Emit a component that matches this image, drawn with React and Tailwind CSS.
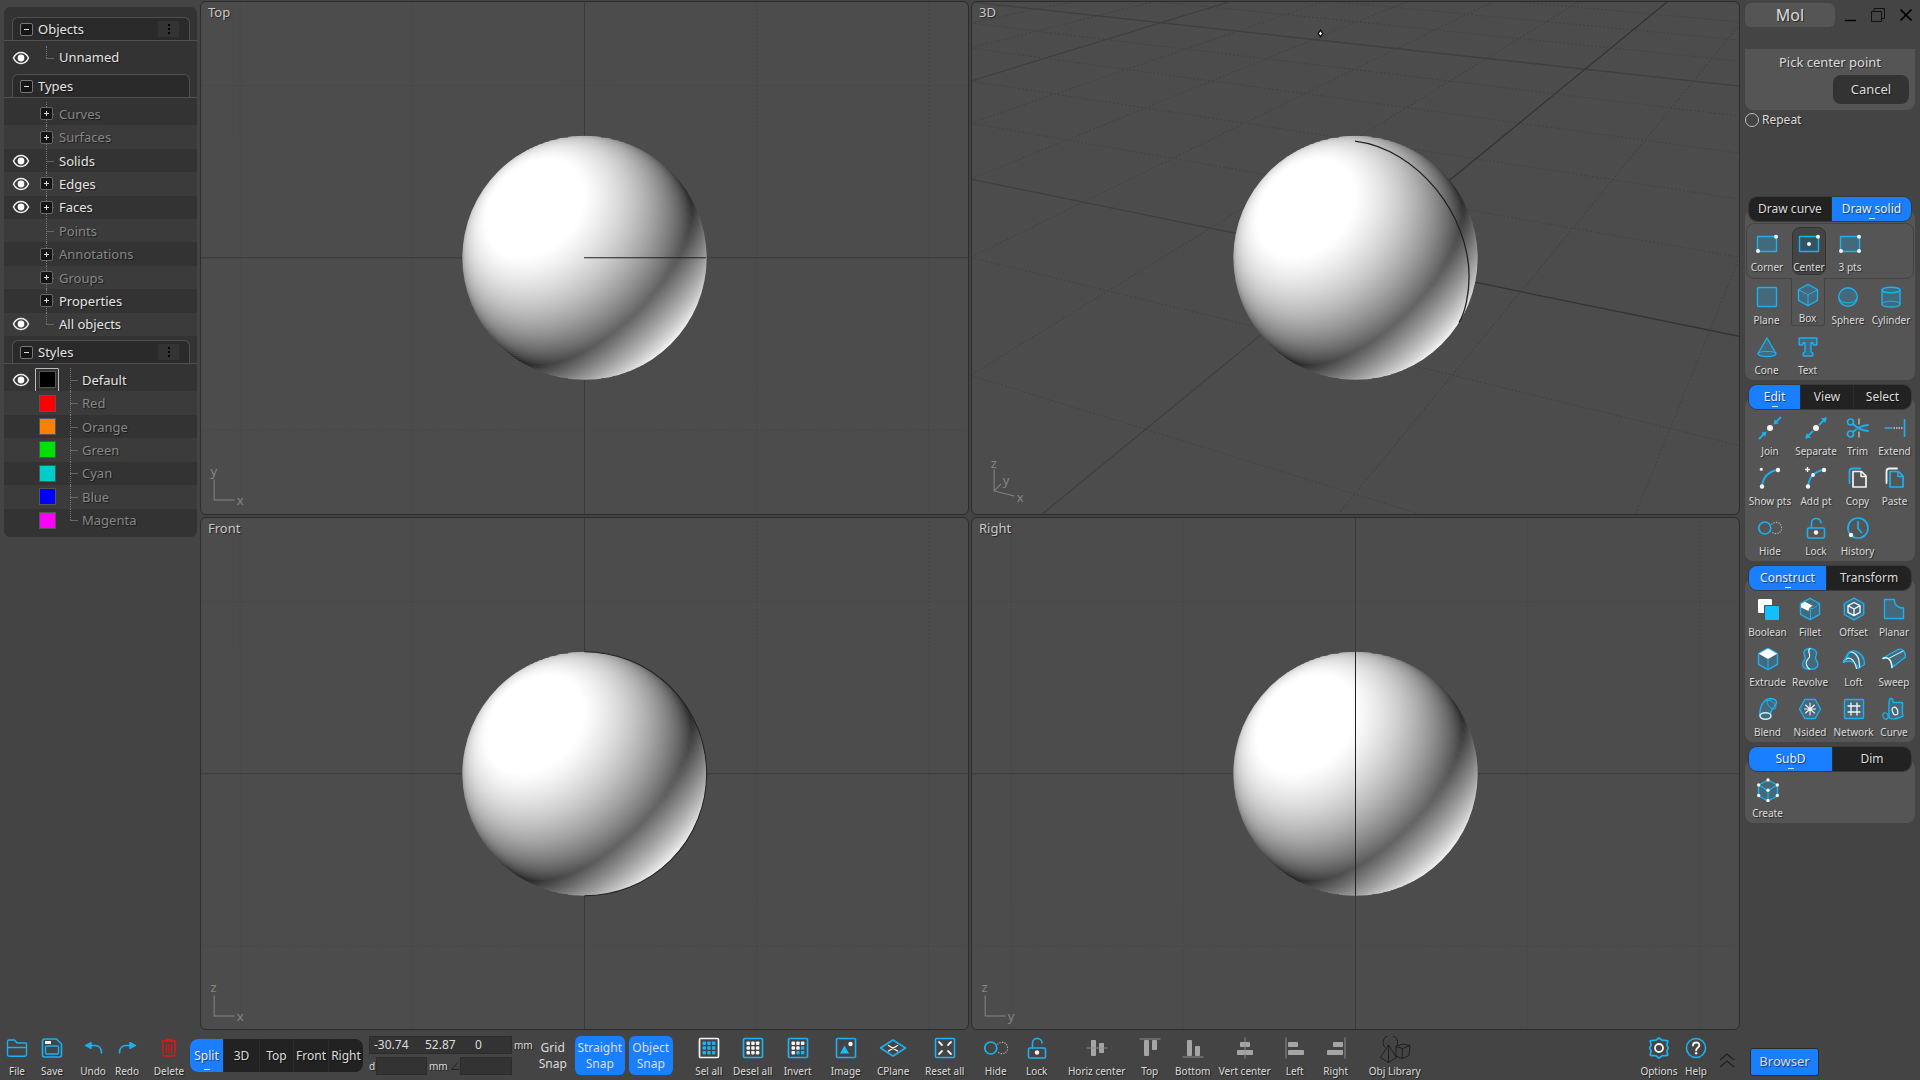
import { useState } from "react";

const BLUE = "#1cb0f0";
const TINT = "#44697a";
const WHITE = "#f4f4f4";

const textShadow = "[text-shadow:1px_1px_1px_rgba(0,0,0,0.55)]";

/* ---------- icons ---------- */

function Svg({ w = 24, children }) {
  return (
    <svg
      width={w}
      height="24"
      viewBox={`0 0 ${w} 24`}
      fill="none"
      stroke={BLUE}
      strokeWidth="1.4"
      strokeLinejoin="round"
      strokeLinecap="round"
      className="shrink-0"
      aria-hidden="true"
    >
      {children}
    </svg>
  );
}

const Dot = ({ x, y, r = 2 }) => (
  <circle cx={x} cy={y} r={r} fill={WHITE} stroke="none" />
);

const CornerIcon = () => (
  <Svg>
    <rect x="2.5" y="4.5" width="19" height="15" fill={TINT} />
    <Dot x="21" y="4.8" />
    <Dot x="3" y="19" />
  </Svg>
);
const CenterIcon = () => (
  <Svg>
    <rect x="2.5" y="4.5" width="19" height="15" fill="#315463" />
    <Dot x="21" y="4.8" />
    <Dot x="12" y="12" />
  </Svg>
);
const ThreePtsIcon = () => (
  <Svg>
    <rect x="2.5" y="4.5" width="19" height="15" fill={TINT} />
    <Dot x="21" y="4.8" />
    <Dot x="3" y="19" />
    <Dot x="21" y="19" />
  </Svg>
);
const PlaneIcon = () => (
  <Svg>
    <rect x="2.5" y="2.5" width="19" height="19" rx="1" fill={TINT} />
  </Svg>
);
const BoxIcon = () => (
  <Svg>
    <path d="M12 1.3 21.5 6.5v10.8L12 22.7 2.5 17.3V6.5z" fill={TINT} />
    <path d="M2.8 6.8 12 12l9.2-5.2M12 12v10.5" strokeWidth="1" />
  </Svg>
);
const SphereIcon = () => (
  <Svg>
    <circle cx="12" cy="12" r="9.3" fill={TINT} />
    <path d="M3 13.5c2.5 6 15.5 6 18 0" strokeWidth="1" />
  </Svg>
);
const CylinderIcon = () => (
  <Svg>
    <path d="M3 5v14c0 4 18 4 18 0V5" fill={TINT} />
    <ellipse cx="12" cy="5" rx="9" ry="2.8" fill={TINT} />
    <path d="M3 19c0-4 18-4 18 0" strokeWidth="1" />
  </Svg>
);
const ConeIcon = () => (
  <Svg>
    <path d="M12 3 3 18.5c0 4 18 4 18 0z" fill={TINT} />
    <path d="M3 18.5c0-3 18-3 18 0" strokeWidth="1" />
  </Svg>
);
const TextIcon = () => (
  <Svg>
    <path
      d="M3.2 3h17.6v7h-3.3c0-2-.5-2.5-2.5-2.5v9c0 1 .5 1.2 1.8 1.5v3H7.2v-3c1.300-.3 1.8-.5 1.8-1.5v-9c-2 0-2.500.5-2.500 2.500H3.2z"
      fill={TINT}
    />
  </Svg>
);
const JoinIcon = () => (
  <Svg>
    <path d="M22.5 1.5 18 6M1.5 22.5 6 18" strokeWidth="1.8" />
    <path d="m15.5 8.5 1.2-5.2 4 4zM8.5 15.5l-1.2 5.2-4-4z" fill={BLUE} stroke="none" />
    <Dot x="12" y="12" r="3" />
  </Svg>
);
const SeparateIcon = () => (
  <Svg>
    <path d="m15.5 8.5 4-4M8.5 15.5l-4 4" strokeWidth="1.8" />
    <path d="m22.8 1.2-1.3 5.8-4.5-4.5zM1.2 22.8l1.3-5.8L7 21.5z" fill={BLUE} stroke="none" />
    <Dot x="12" y="12" r="3" />
  </Svg>
);
const TrimIcon = () => (
  <Svg>
    <path d="M13 3v5M13 16v5" stroke="#b5b5b5" strokeWidth="1.5" />
    <circle cx="4.5" cy="6" r="3" strokeWidth="1.7" />
    <circle cx="4.5" cy="18" r="3" strokeWidth="1.7" />
    <path d="M7 8c4 4 9 6.500 15 7M7 16c4-4 9-6.500 15-7" strokeWidth="1.8" />
  </Svg>
);
const ExtendIcon = () => (
  <Svg>
    <path d="M1.5 12h8M21.5 3v18" strokeWidth="1.6" strokeLinecap="butt" />
    <path d="M10.5 12h10" stroke="#c5c5c5" strokeDasharray="1.5 1" strokeLinecap="butt" />
  </Svg>
);
const ShowPtsIcon = () => (
  <Svg>
    <path d="M4 20C5 11 11 5 20 4" strokeWidth="1.8" />
    <Dot x="4" y="20.5" r="2.2" />
    <Dot x="20" y="4" r="2.2" />
    <Dot x="3.3" y="3.3" r="1.5" />
  </Svg>
);
const AddPtIcon = () => (
  <Svg>
    <path d="M4 20C5 11 11 5 20 4" strokeWidth="1.8" />
    <Dot x="4" y="20.5" r="2.2" />
    <Dot x="20" y="4" r="2.2" />
    <Dot x="9" y="9" r="1.9" />
    <path d="M3.5 1v5M1 3.5h5" stroke={WHITE} strokeLinecap="butt" />
  </Svg>
);
const Pages = ({ front, back }) => (
  <Svg>
    <path d="M14 2.5H6.5a3 3 0 0 0-3 3V17" stroke={back} strokeWidth="1.8" />
    <path d="M7 5.5h8.5l4.500 4.500v11H7z" stroke={front} strokeWidth="1.7" />
    <path d="M15 5.8v4.7h4.8" stroke={front} strokeWidth="1.5" />
  </Svg>
);
const CopyIcon = () => <Pages front={WHITE} back={BLUE} />;
const PasteIcon = () => <Pages front={BLUE} back={WHITE} />;
const HideIcon = () => (
  <Svg>
    <circle cx="6.8" cy="12" r="6" strokeWidth="1.7" />
    <path
      d="M13.5 8.5a5.7 5.7 0 1 1 0 7"
      stroke="#b5b5b5"
      strokeWidth="1.2"
      strokeDasharray="1.2 1.3"
      strokeLinecap="butt"
    />
  </Svg>
);
const LockIcon = () => (
  <Svg>
    <rect x="3.5" y="12" width="17" height="10" rx="1.2" strokeWidth="1.6" />
    <path d="M7.5 12V7c0-6 9.500-6 9.500 0" strokeWidth="1.6" />
    <Dot x="12" y="16.5" r="2.2" />
  </Svg>
);
const HistoryIcon = () => (
  <Svg>
    <circle cx="12" cy="12" r="10" strokeWidth="1.7" />
    <path d="M12 5.5v7l3.500 4" strokeWidth="1.7" />
    <Dot x="5" y="19" r="2.2" />
  </Svg>
);
const BooleanIcon = () => (
  <Svg>
    <rect x="2" y="2" width="14" height="14" rx="1" fill="#fff" stroke="none" />
    <rect x="8" y="8" width="15" height="15" rx="1" fill="#4d4d4d" stroke="none" />
    <rect x="9" y="9" width="14" height="14" rx="1" fill="#12bfff" stroke="none" />
  </Svg>
);
const FilletIcon = () => (
  <Svg>
    <path d="M12 1.3 21.5 6.5v10.8L12 22.7 2.5 17.3V6.5z" fill={TINT} />
    <path d="M13 11.5c4 1 6-4 8.500-5M12.500 12v10.500" strokeWidth="1" />
    <path d="m3 7 4-2.300 8 4.300c-2.500.5-4 2-4.500 5L3.200 10.500z" fill="#fff" stroke="none" />
  </Svg>
);
const OffsetIcon = () => (
  <Svg>
    <path d="M12 1.2 21.7 6.5v11L12 22.8 2.3 17.5v-11z" fill={TINT} />
    <path d="m12 5.5 6 3.200v6.700l-6 3.300-6-3.300V8.700zM6 8.700l6 3.300 6-3.300M12 12v6.500" stroke={WHITE} />
  </Svg>
);
const PlanarIcon = () => (
  <Svg>
    <path d="M2.5 2.5h10c-.5 5 3 8.500 9 8.500v10.500h-19z" fill={TINT} />
  </Svg>
);
const ExtrudeIcon = () => (
  <Svg>
    <path d="M12 1.3 21.5 6.5v10.8L12 22.7 2.5 17.3V6.5z" fill={TINT} />
    <path d="M12 12v10.5" strokeWidth="1" />
    <path d="m12 1.5 9.200 5.200L12 12 2.800 6.700z" fill="#fff" stroke="none" />
  </Svg>
);
const RevolveIcon = () => (
  <Svg>
    <path
      d="M12 1.5c-4.500 0-7 2.700-6 5.500.5 2 1.800 3 1 5-1.500 2-3 3.500-2.500 6 1 5.500 13.500 5.800 15.200.5.700-2.800-.7-4.500-2-6.500-.8-2 .5-3 .8-5C19 3.500 16 1.500 12 1.500z"
      fill={TINT}
    />
    <path d="M12 1.5c-3.500 2.500 1 5.500-.5 8.500-2 3-4.500 4.500-3 8 .5 1.800 1.500 3 3 4" stroke="#d5eef8" strokeWidth="1.2" />
  </Svg>
);
const LoftIcon = () => (
  <Svg>
    <path d="M5.500 7C10 .5 22.500 5 22.500 17.500l-6.500 4C15 17 11 12.500 1.500 15z" fill={TINT} />
    <path d="M1.500 15C5 9 12 9.500 14.500 21.500M8 5c6.500 0 9.500 6 9.500 15" stroke="#e3f5fd" strokeWidth="1.2" />
    <path d="M1.500 15 8 4.500" strokeWidth="1.4" />
  </Svg>
);
const SweepIcon = () => (
  <Svg>
    <path d="M1 11 16 2.500c4.500-1.500 7.500 2 7.500 7.500L10 20.500C10 14 7 9.500 1 11z" fill={TINT} />
    <path d="M1 11.500c5.500-2.500 8.500 2 9 9" stroke="#dff4fd" strokeWidth="1.5" />
    <path d="M7.500 11 21 4" stroke="#dff4fd" strokeWidth="1" />
  </Svg>
);
const BlendIcon = () => (
  <Svg>
    <path d="M3.500 18C4 10 6.500 4 11.500 2c5-1.500 9.500.5 9 4-1 4-6 5-6.500 13" fill={TINT} />
    <path d="M11 4c-1 3 5 10 8.500 7.500C22 8 14 1 11 4z" strokeWidth="1" />
    <ellipse cx="9.5" cy="19" rx="5.5" ry="3.2" fill={TINT} stroke="#c9effd" strokeWidth="1.5" />
  </Svg>
);
const NsidedIcon = () => (
  <Svg>
    <path d="M6.800 2.500h10.400L22.500 12l-5.300 9.500H6.800L1.500 12z" fill={TINT} />
    <path d="M12 6v12M6.500 12h11M7.500 8l9 8M16.500 8l-9 8" stroke={WHITE} strokeWidth="1.1" />
  </Svg>
);
const NetworkIcon = () => (
  <Svg>
    <rect x="2.5" y="2.5" width="19" height="19" rx="1" fill={TINT} />
    <path d="M9 6v12M15 6v12M6 9h12M6 15h12" stroke={WHITE} strokeWidth="1.3" />
  </Svg>
);
const CurveIcon = () => (
  <Svg>
    <path d="M7 5.500C7 0 11 .5 11 5.500h9.500c.5 5-1 9 .5 13.500-4 2-9 4.500-13.500 2C6 16 7.500 10 7 5.500z" fill={TINT} />
    <ellipse cx="13" cy="14" rx="2.6" ry="4" stroke={WHITE} strokeWidth="1.2" transform="rotate(-18 13 14)" />
    <ellipse cx="3.5" cy="19" rx="2.5" ry="3.3" strokeWidth="1.2" transform="rotate(-18 3.5 19)" />
  </Svg>
);
const CreateIcon = () => (
  <Svg>
    <path d="M12 2 21.500 7v11L12 23 2.500 18V7z" fill={TINT} />
    <path d="M2.500 7 12 12.500 21.500 7M12 12.500V23" strokeWidth="1.1" />
    {[[12, 2], [21.3, 7], [21.3, 17.5], [12, 22.5], [2.7, 17.5], [2.7, 7], [12, 12.3]].map(([x, y]) => (
      <Dot key={`${x}-${y}`} x={x} y={y} r="1.7" />
    ))}
  </Svg>
);

const FileIcon = () => (
  <Svg>
    <path d="M2.500 18.500V5.500a1.500 1.500 0 0 1 1.500-1.500h5.500L12 7h8.500a1 1 0 0 1 1 1v10.500a1.800 1.800 0 0 1-1.800 1.800H4.300a1.800 1.800 0 0 1-1.800-1.800zM2.500 11.500h19" />
  </Svg>
);
const SaveIcon = () => (
  <Svg>
    <path d="M4.500 3h12L21.500 8v11a2 2 0 0 1-2 2h-15a2 2 0 0 1-2-2V5a2 2 0 0 1 2-2z" strokeWidth="1.6" />
    <rect x="5.5" y="10" width="13" height="8" rx="1" />
    <rect x="5" y="5" width="6" height="3" fill={WHITE} stroke="none" />
  </Svg>
);
const UndoIcon = () => (
  <Svg>
    <path d="M5 9.500h9c4 0 6.500 3 6.500 7.500" strokeWidth="1.6" />
    <path d="m4.500 9.500 5.500-3v6z" fill={BLUE} />
  </Svg>
);
const RedoIcon = () => (
  <Svg>
    <path d="M20 9.500h-9c-4 0-6.500 3-6.500 7.500" strokeWidth="1.6" />
    <path d="m20.500 9.500-5.500-3v6z" fill={BLUE} />
  </Svg>
);
const DeleteIcon = () => (
  <Svg>
    <g stroke="#e01414">
      <path d="M6 6v12.500a1.500 1.500 0 0 0 1.500 1.500h9a1.500 1.500 0 0 0 1.500-1.500V6M5 5h14M9.500 4.500v-1h5v1" strokeWidth="1.5" />
      <path d="M9.500 8v9.500M12 8v9.500M14.500 8v9.500" strokeWidth="1.1" />
    </g>
  </Svg>
);

const gridCells = [0, 1, 2].flatMap((r) => [0, 1, 2].map((c) => [r, c]));
const Matrix = ({ frame, fill }) => (
  <Svg>
    <rect x="2.5" y="2.5" width="19" height="19" rx="1.2" stroke={frame} strokeWidth="1.7" />
    {gridCells.map(([r, c]) => (
      <rect
        key={`${r}-${c}`}
        x={5.5 + c * 4.7}
        y={5.5 + r * 4.7}
        width="3.5"
        height="3.5"
        rx="0.8"
        fill={fill(r, c)}
        stroke="none"
      />
    ))}
  </Svg>
);
const SelAllIcon = () => <Matrix frame={WHITE} fill={() => BLUE} />;
const DeselAllIcon = () => <Matrix frame={BLUE} fill={() => WHITE} />;
const InvertIcon = () => (
  <Matrix frame={BLUE} fill={(r, c) => (r + c > 2 || (r === 2 && c > 0) ? BLUE : WHITE)} />
);
const ImageIcon = () => (
  <Svg>
    <rect x="2.5" y="2.5" width="19" height="19" rx="1" strokeWidth="1.6" />
    <path d="m10.500 9.500 4.500 8H6z" fill="#12bfff" stroke="none" />
    <Dot x="16.5" y="8" r="2.2" />
  </Svg>
);
const CPlaneIcon = () => (
  <Svg w={28}>
    <path d="M14 4 26.500 12 14 20 1.500 12z" strokeWidth="1.6" />
    <path d="m9.500 9.500 9 5.500M18.500 9.500l-9 5.500" stroke={WHITE} />
  </Svg>
);
const ResetIcon = () => (
  <Svg>
    <rect x="2.5" y="2.5" width="19" height="19" rx="1" strokeWidth="1.6" />
    <path d="m6 6 3 3M18 6l-3 3M6 18l3-3M18 18l-3-3" stroke={WHITE} strokeWidth="1.8" />
  </Svg>
);

const Align = ({ d, bars }) => (
  <Svg>
    {bars.map(([x, y, w, h]) => (
      <rect key={`${x}-${y}`} x={x} y={y} width={w} height={h} rx="0.8" fill="#a5a5a5" stroke="none" />
    ))}
    <path d={d} stroke="#8c8c8c" strokeWidth="1" strokeLinecap="butt" />
  </Svg>
);
const HorizCenterIcon = () => <Align bars={[[6, 4, 5, 16], [14, 7, 5, 10]]} d="M1.500 12h21" />;
const TopIcon = () => <Align bars={[[6, 4, 5, 16], [14, 4, 5, 10]]} d="M1.500 3h21" />;
const BottomIcon = () => <Align bars={[[6, 4, 5, 16], [14, 10, 5, 10]]} d="M1.500 21h21" />;
const VertCenterIcon = () => <Align bars={[[7, 6, 10, 5], [4, 14, 16, 5]]} d="M12 1.500v21" />;
const LeftIcon = () => <Align bars={[[5, 6, 10, 5], [5, 14, 16, 5]]} d="M3 1.500v21" />;
const RightIcon = () => <Align bars={[[9, 6, 10, 5], [3, 14, 16, 5]]} d="M21 1.500v21" />;
const LibraryIcon = () => (
  <svg width="34" height="28" viewBox="0 0 34 28" fill="none" stroke="#1f1f1f" className="-mb-1 shrink-0" aria-hidden="true">
    <path d="M7 11.500a7.300 7.300 0 1 1 11.500-1M10.500 9 2.500 21.500l8 5 8-5zM10.500 9v17.500M18 10.500l7-2.500 7 1.500-1 10-7 3-6-2.500zM18 10.500l6.500 2L32 9.500M24.500 12.500l-.5 10" />
  </svg>
);
const OptionsIcon = () => (
  <Svg>
    <path
      d="M12 1.800c1.500 1.200 2.500 2.300 4 2.500 1.500.200 2.800-.3 4.800.6-.2 2-1.100 3.300-.8 4.600.3 1.200 1.300 1.500 1.300 2.500s-1 1.300-1.300 2.500c-.3 1.300.6 2.600.8 4.600-2 .9-3.300.4-4.800.6-1.500.2-2.500 1.300-4 2.500-1.500-1.200-2.500-2.300-4-2.500-1.500-.2-2.800.3-4.800-.6.2-2 1.100-3.300.8-4.600C3.700 13.300 2.700 13 2.700 12S3.700 10.700 4 9.500c.3-1.300-.6-2.600-.8-4.600 2-.9 3.300-.4 4.800-.6 1.500-.2 2.500-1.300 4-2.500z"
      strokeWidth="1.7"
    />
    <circle cx="12" cy="12" r="4" stroke={WHITE} strokeWidth="1.8" />
  </Svg>
);
const HelpIcon = () => (
  <Svg>
    <circle cx="12" cy="12" r="9.5" strokeWidth="1.6" />
    <path d="M9 9.500c0-4 6.300-4 6.300-.3 0 2.600-3.200 2.500-3.200 5.200" stroke={WHITE} strokeWidth="1.9" />
    <Dot x="12.1" y="17.3" r="1.2" />
  </Svg>
);

/* ---------- shared controls ---------- */

function IconButton({ icon: Icon, label, className = "" }) {
  return (
    <button className={`flex flex-col items-center gap-[5px] text-[10px] leading-3 whitespace-nowrap ${className}`}>
      <Icon />
      <span className={textShadow}>{label}</span>
    </button>
  );
}

function Tabs({ items, initial, widths, className = "" }) {
  const [active, setActive] = useState(initial);
  return (
    <div className={`flex overflow-hidden bg-[#222] text-xs ${className}`}>
      {items.map((item, i) => (
        <button
          key={item}
          onClick={() => setActive(item)}
          className={`relative border-r border-[#2c2c2c] last:border-r-0 ${textShadow} ${widths[i]} ${
            active === item ? "bg-[#1a7fff] text-[#eee]" : ""
          }`}
        >
          {item}
          {active === item && (
            <span className="absolute bottom-[2px] left-1/2 -ml-[3px] h-px w-[6px] bg-[#e0e0e0]" />
          )}
        </button>
      ))}
    </div>
  );
}

/* ---------- object browser ---------- */

const Eye = () => (
  <svg width="18" height="14" viewBox="0 0 18 14" aria-hidden="true">
    <path d="M1.500 7C5-.3 13-.3 16.500 7 13 14.300 5 14.300 1.500 7z" fill="none" stroke="#eee" strokeWidth="1.6" />
    <circle cx="9" cy="7" r="3.4" fill="#fff" />
  </svg>
);

const Toggle = ({ open, dim }) => (
  <span
    className={`relative flex size-[13px] items-center justify-center rounded-[2px] border bg-[#151515] ${
      dim ? "border-[#666]" : "border-[#777]"
    }`}
  >
    <span className="absolute h-px w-[5px] bg-[#ddd]" />
    {!open && <span className="absolute h-[5px] w-px bg-[#ddd]" />}
  </span>
);

function SectionHeader({ title, menu }) {
  return (
    <div className="border-b border-[#505050] pr-[7px] pl-2">
      <div className="flex h-[23px] items-center rounded-t-md border border-b-0 border-[#505050] bg-[#2a2a2a] pr-[10px] pl-[7px]">
        <button className="flex items-center gap-[5px]">
          <Toggle open />
          <span className={`text-[13px] leading-5 text-[#e4e4e4] ${textShadow}`}>{title}</span>
        </button>
        {menu && (
          <button className="ml-auto flex h-4 w-[21px] flex-col items-center justify-center gap-[2px] bg-[#333]" aria-label={`${title} menu`}>
            <span className="size-[2px] bg-black" />
            <span className="size-[2px] bg-black" />
            <span className="size-[2px] bg-black" />
          </button>
        )}
      </div>
    </div>
  );
}

const types = [
  { name: "Curves", expand: true },
  { name: "Surfaces", expand: true },
  { name: "Solids", on: true, eye: true },
  { name: "Edges", on: true, eye: true, expand: true },
  { name: "Faces", on: true, eye: true, expand: true },
  { name: "Points" },
  { name: "Annotations", expand: true },
  { name: "Groups", expand: true },
  { name: "Properties", on: true, expand: true },
  { name: "All objects", on: true, eye: true },
];

const styles = [
  { name: "Default", swatch: "bg-black", on: true },
  { name: "Red", swatch: "bg-[#ff0000]" },
  { name: "Orange", swatch: "bg-[#ff8000]" },
  { name: "Green", swatch: "bg-[#00e000]" },
  { name: "Cyan", swatch: "bg-[#00cccc]" },
  { name: "Blue", swatch: "bg-[#0000ff]" },
  { name: "Magenta", swatch: "bg-[#ff00ff]" },
];

function Branch({ last }) {
  return (
    <span className="relative h-full w-[14px]">
      <span className={`absolute top-0 left-[6px] border-l border-dotted border-[#777] ${last ? "h-1/2" : "h-full"}`} />
      <span className="absolute top-1/2 left-[6px] w-[8px] border-t border-[#666]" />
    </span>
  );
}

function ObjectBrowser() {
  return (
    <aside className="mt-[7px] ml-1 w-[193px] rounded-md bg-[#333] pt-[10px] pb-[5px] text-[13px]">
      <SectionHeader title="Objects" menu />
      <div className="flex h-[33px] items-center pl-2">
        <button aria-label="Toggle Unnamed"><Eye /></button>
        <span className="ml-[10px] flex h-[23px]"><Branch last /></span>
        <span className={`ml-[5px] text-[#e4e4e4] ${textShadow}`}>Unnamed</span>
      </div>
      <SectionHeader title="Types" />
      <ul className="mt-1 flex h-[234px] flex-col">
        {types.map((t, i) => (
          <li key={t.name} className={`flex min-h-0 flex-1 items-center pl-2 ${i % 2 ? "bg-[#3b3b3b]" : "bg-[#333]"}`}>
            <span className="flex w-[18px]">{t.eye && <Eye />}</span>
            <span className="relative ml-[10px] flex h-full items-center">
              <Branch last={i === types.length - 1} />
              {t.expand && (
                <button className="absolute left-0" aria-label={`Expand ${t.name}`}>
                  <Toggle dim />
                </button>
              )}
            </span>
            <span className={`ml-[5px] leading-5 ${textShadow} ${t.on ? "text-[#e4e4e4]" : "text-[#878787]"}`}>{t.name}</span>
          </li>
        ))}
      </ul>
      <div className="h-1" />
      <SectionHeader title="Styles" menu />
      <ul className="mt-1 flex h-[164px] flex-col">
        {styles.map((s, i) => (
          <li key={s.name} className={`flex min-h-0 flex-1 items-center pl-2 ${i % 2 ? "bg-[#3b3b3b]" : "bg-[#333]"}`}>
            <span className="flex w-[18px]">{s.on && <Eye />}</span>
            <button
              aria-label={`Style ${s.name}`}
              className={`ml-[5px] flex size-[24px] shrink-0 items-center justify-center ${s.on ? "rounded-[1px] border border-[#bbb]" : ""}`}
            >
              <span className={`size-[17px] border border-[#555] ${s.swatch}`} />
            </button>
            <span className="ml-[5px] flex h-full"><Branch last={i === styles.length - 1} /></span>
            <span className={`ml-[4px] leading-5 ${textShadow} ${s.on ? "text-[#e4e4e4]" : "text-[#878787]"}`}>{s.name}</span>
          </li>
        ))}
      </ul>
    </aside>
  );
}

/* ---------- viewports ---------- */

const R = 122;
const STOPS = 60;

// Brightness of the sphere at a point of its disc: head light, key light from
// the upper left and a fill light from the lower right.
function shade(x, y) {
  const z = Math.sqrt(Math.max(0, 1 - x * x - y * y));
  const u = (x + y) * 0.7071 - 0.53 * z - 0.2;
  const v = 0.1 + 0.37 * z + (u < 0 ? -0.57 * u : 1.1 * u);
  return Math.round(Math.min(1, v) * 255);
}

const rows = Array.from({ length: R }, (_, i) => {
  const y = -R + i * 2;
  const half = Math.sqrt(Math.max(0, R * R - (y + 1) * (y + 1))) + 1;
  const stops = Array.from({ length: STOPS + 1 }, (_, k) => {
    const x = -half + (2 * half * k) / STOPS;
    return shade(x / R, (y + 1) / R);
  });
  return { y, half, stops };
});

function SphereDefs() {
  return (
    <svg className="absolute size-0" aria-hidden="true">
      <defs>
        <clipPath id="disc">
          <circle r={R} />
        </clipPath>
        {rows.map((row, i) => (
          <linearGradient key={row.y} id={`row${i}`}>
            {row.stops.map((v, k) => (
              <stop key={k} offset={k / STOPS} stopColor={`rgb(${v},${v},${v})`} />
            ))}
          </linearGradient>
        ))}
        <g id="sphere" clipPath="url(#disc)">
          {rows.map((row, i) => (
            <rect key={row.y} x={-row.half} y={row.y} width={row.half * 2} height="2.5" fill={`url(#row${i})`} />
          ))}
        </g>
      </defs>
    </svg>
  );
}

function FlatGrid() {
  return (
    <g strokeWidth="1">
      <path
        d="M40.500 0v514M212.500 0v514M556.500 0v514M728.500 0v514M0 84.500h769M0 428.500h769"
        stroke="#464646"
        strokeDasharray="2 2"
      />
      <path d="M384.500 0v514M0 256.500h769" stroke="#3a3a3a" />
    </g>
  );
}

function FlatAxes({ up, across }) {
  return (
    <g fill="none" stroke="#858585">
      <path d="M14.500 478v20.500H35" />
      <g fill="#858585" stroke="none" fontSize="13">
        <text x="11" y="475">{up}</text>
        <text x="37" y="504">{across}</text>
      </g>
    </g>
  );
}

function PerspectiveGrid() {
  return (
    <g fill="none">
      <path
        d="M0 22 768 115M0 47 768 152M0 80 768 198M0 122 768 256M0 256 768 444M0 374 450 513M182 0 768 60M357 0 768 39M538 0 768 21M0 22 105 0M0 47 185 0M0 122 354 0M0 178 437 0M0 256 523 0M0 374 609 0M367 513 768 24M664 513 768 256"
        stroke="#424242"
        strokeDasharray="2 2"
      />
      <path d="M0 1 768 85M261 0 0 80M0 178 384 256.500 71 513" stroke="#3f3f3f" strokeWidth="1.3" />
      <path d="M697 0 384 256.500 768 335" stroke="#343434" strokeWidth="1.3" />
    </g>
  );
}

function Viewport({ name, children }) {
  return (
    <section className="relative min-h-0 min-w-0 overflow-hidden rounded-md border border-[#2c2c2c] bg-[#4c4c4c]">
      <svg className="absolute inset-0 size-full" viewBox="1 1 767 511" preserveAspectRatio="xMidYMid slice">
        {children}
      </svg>
      <h2 className={`relative pt-px pl-[7px] text-[13px] leading-[18px] text-[#c8c8c8] ${textShadow}`}>{name}</h2>
    </section>
  );
}

const Sphere = () => <use href="#sphere" x="384.5" y="256.5" />;

function Viewports() {
  return (
    <main className="mt-px grid min-h-0 min-w-0 flex-1 grid-cols-2 grid-rows-2 gap-[2px]">
      <SphereDefs />
      <Viewport name="Top">
        <FlatGrid />
        <Sphere />
        <path d="M384 256.500h122" stroke="#222" />
        <FlatAxes up="y" across="x" />
      </Viewport>
      <Viewport name="3D">
        <PerspectiveGrid />
        <Sphere />
        <path d="M384 140C448 148 498 215 498 275c0 18-4 36-10 46" fill="none" stroke="#222" strokeWidth="1.3" />
        <path d="M349.500 28l3 4.500-3 4.500-3-4.500z" fill="#111" />
        <path d="M349.500 30.500l1.500 2-1.500 2-1.500-2z" fill="#fff" />
        <path d="M23.500 468v21.500l20 5M23.500 489.500l7-7" fill="none" stroke="#858585" />
        <g fill="#858585" fontSize="13">
          <text x="20" y="467">z</text>
          <text x="32" y="484">y</text>
          <text x="46" y="501">x</text>
        </g>
      </Viewport>
      <Viewport name="Front">
        <FlatGrid />
        <Sphere />
        <path d="M384.500 134.500a122 122 0 0 1 0 244" fill="none" stroke="#222" />
        <FlatAxes up="z" across="x" />
      </Viewport>
      <Viewport name="Right">
        <FlatGrid />
        <Sphere />
        <path d="M384.500 134.500v244" stroke="#222" />
        <FlatAxes up="z" across="y" />
      </Viewport>
    </main>
  );
}

/* ---------- tool palette ---------- */

function ToolSection({ tabs, initial, widths, cols, tools }) {
  return (
    <section className="mt-[5px]">
      <Tabs items={tabs} initial={initial} widths={widths} className="relative z-10 mr-1 ml-1 h-6 rounded-lg outline outline-[#3a3a3a]" />
      <div className={`-mt-[11px] grid justify-start gap-y-[9px] rounded-lg bg-[#555] pt-[18px] pb-1 pl-1 ${cols}`}>
        {tools.map(([label, icon]) => (
          <IconButton key={label} label={label} icon={icon} />
        ))}
      </div>
    </section>
  );
}

function ToolPalette() {
  return (
    <aside className="w-[180px] shrink-0 px-[5px]">
      <div className="flex h-[30px] items-center pr-[3px]">
        <button className={`h-6 w-[90px] rounded-md bg-[#555] text-base leading-6 ${textShadow}`}>Mol</button>
        <div className="ml-auto flex items-center gap-[15px]">
          <button aria-label="Minimize">
            <svg width="11" height="14" viewBox="0 0 11 14"><path d="M0 12.500h11" stroke="#000" strokeWidth="1.5" /></svg>
          </button>
          <button aria-label="Restore">
            <svg width="14" height="14" viewBox="0 0 14 14" fill="none" stroke="#111">
              <path d="M.5 3.500h10v10H.5zM3 3.500v-3h10.500v10h-3" />
            </svg>
          </button>
          <button aria-label="Close">
            <svg width="12" height="12" viewBox="0 0 12 12"><path d="m.5.500 11 11M11.500.5l-11 11" stroke="#000" strokeWidth="1.6" /></svg>
          </button>
        </div>
      </div>

      <div className="mt-[19px] flex h-[61px] flex-col rounded-b-lg bg-[#555] pt-[3px] text-[13px]">
        <p className={`text-center leading-5 ${textShadow}`}>Pick center point</p>
        <button className={`mt-[3px] mr-[6px] h-[29px] w-[76px] self-end rounded-lg bg-[#333] ${textShadow}`}>Cancel</button>
      </div>
      <label className={`mt-[2px] flex items-center gap-[3px] text-xs leading-4 ${textShadow}`}>
        <input type="checkbox" className="size-[14px] appearance-none rounded-full border border-[#bbb] checked:bg-[#1a7fff]" />
        Repeat
      </label>

      <section className="mt-[69px]">
        <Tabs
          items={["Draw curve", "Draw solid"]}
          initial="Draw solid"
          widths={["w-[83px]", "flex-1"]}
          className="relative z-10 mr-1 ml-1 h-6 rounded-lg outline outline-[#3a3a3a]"
        />
        <div className="-mt-[11px] rounded-lg bg-[#555] px-px pt-[13px] pb-1">
          <div className="grid h-14 grid-cols-[40px_44px_38px] rounded-lg border border-[#444] pt-[3px]">
            <IconButton icon={CornerIcon} label="Corner" className="pt-[5px]" />
            <IconButton
              icon={CenterIcon}
              label="Center"
              className="h-[48px] w-[34px] justify-self-center rounded-lg border border-[#333] bg-[#444] pt-[4px]"
            />
            <IconButton icon={ThreePtsIcon} label="3 pts" className="pt-[5px]" />
          </div>
          <div className="grid h-[47px] grid-cols-[41px_41px_40px_46px]">
            <IconButton icon={PlaneIcon} label="Plane" className="pt-[6px]" />
            <IconButton
              icon={BoxIcon}
              label="Box"
              className="-mt-px w-[34px] justify-self-center rounded-b-[3px] border border-t-0 border-[#444] bg-[#555] pt-[5px]"
            />
            <IconButton icon={SphereIcon} label="Sphere" className="pt-[6px]" />
            <IconButton icon={CylinderIcon} label="Cylinder" className="pt-[6px]" />
          </div>
          <div className="mt-[9px] grid grid-cols-[41px_41px]">
            <IconButton icon={ConeIcon} label="Cone" />
            <IconButton icon={TextIcon} label="Text" />
          </div>
        </div>
      </section>

      <ToolSection
        tabs={["Edit", "View", "Select"]}
        initial="Edit"
        widths={["w-[52px]", "w-[53px]", "flex-1"]}
        cols="grid-cols-[42px_40px_33px_31px] gap-x-[5px]"
        tools={[
          ["Join", JoinIcon],
          ["Separate", SeparateIcon],
          ["Trim", TrimIcon],
          ["Extend", ExtendIcon],
          ["Show pts", ShowPtsIcon],
          ["Add pt", AddPtIcon],
          ["Copy", CopyIcon],
          ["Paste", PasteIcon],
          ["Hide", HideIcon],
          ["Lock", LockIcon],
          ["History", HistoryIcon],
        ]}
      />
      <ToolSection
        tabs={["Construct", "Transform"]}
        initial="Construct"
        widths={["w-[78px]", "flex-1"]}
        cols="grid-cols-[37px_36px_39px_30px] gap-x-[6px]"
        tools={[
          ["Boolean", BooleanIcon],
          ["Fillet", FilletIcon],
          ["Offset", OffsetIcon],
          ["Planar", PlanarIcon],
          ["Extrude", ExtrudeIcon],
          ["Revolve", RevolveIcon],
          ["Loft", LoftIcon],
          ["Sweep", SweepIcon],
          ["Blend", BlendIcon],
          ["Nsided", NsidedIcon],
          ["Network", NetworkIcon],
          ["Curve", CurveIcon],
        ]}
      />
      <ToolSection
        tabs={["SubD", "Dim"]}
        initial="SubD"
        widths={["w-[84px]", "flex-1"]}
        cols="grid-cols-[37px]"
        tools={[["Create", CreateIcon]]}
      />
    </aside>
  );
}

/* ---------- bottom bar ---------- */

const selectTools = [
  ["Sel all", SelAllIcon, "w-[36px]"],
  ["Desel all", DeselAllIcon, "w-[52px]"],
  ["Invert", InvertIcon, "w-[38px]"],
  ["Image", ImageIcon, "w-[58px]"],
  ["CPlane", CPlaneIcon, "w-[37px]"],
  ["Reset all", ResetIcon, "w-[66px]"],
  ["Hide", HideIcon, "w-[36px]"],
  ["Lock", LockIcon, "w-[46px]"],
  ["Horiz center", HorizCenterIcon, "w-[74px]"],
  ["Top", TopIcon, "w-[32px]"],
  ["Bottom", BottomIcon, "w-[54px]"],
  ["Vert center", VertCenterIcon, "w-[50px]"],
  ["Left", LeftIcon, "w-[50px]"],
  ["Right", RightIcon, "w-[32px]"],
];

const field = "border border-[#2c2c2c] bg-[#333]";

function BottomBar() {
  return (
    <footer className="flex h-[50px] shrink-0 pt-[6px]">
      <IconButton icon={FileIcon} label="File" className="w-[34px]" />
      <IconButton icon={SaveIcon} label="Save" className="w-[36px]" />
      <IconButton icon={UndoIcon} label="Undo" className="ml-[6px] w-[34px]" />
      <IconButton icon={RedoIcon} label="Redo" className="w-[34px]" />
      <IconButton icon={DeleteIcon} label="Delete" className="ml-[6px] w-[38px]" />
      <Tabs
        items={["Split", "3D", "Top", "Front", "Right"]}
        initial="Split"
        widths={["w-[34px]", "w-[36px]", "w-[34px]", "w-[35px]", "w-[34px]"]}
        className="mt-[3px] ml-[2px] h-[33px] rounded-lg"
      />
      <div className="ml-[6px] flex flex-col gap-[3px] text-[10px]">
        <div className="flex items-center gap-[2px]">
          <div className={`flex h-[18px] w-[143px] pl-[4px] text-xs ${field}`}>
            <input aria-label="x" defaultValue="-30.74" className="w-[51px] bg-transparent outline-none" />
            <input aria-label="y" defaultValue="52.87" className="w-[50px] bg-transparent outline-none" />
            <input aria-label="z" defaultValue="0" className="w-[30px] bg-transparent outline-none" />
          </div>
          <span className={textShadow}>mm</span>
        </div>
        <div className="flex w-[143px] items-center">
          <label htmlFor="distance" className={`w-[7px] ${textShadow}`}>d</label>
          <input id="distance" className={`h-[18px] w-[51px] outline-none ${field}`} />
          <span className={`ml-[2px] ${textShadow}`}>mm</span>
          <label htmlFor="angle" aria-label="Angle" className="ml-auto">
            <svg width="8" height="8" viewBox="0 0 8 8"><path d="M7 .5.500 7.500H8" fill="none" stroke="#222" /></svg>
          </label>
          <input id="angle" className={`ml-px h-[18px] w-[52px] outline-none ${field}`} />
        </div>
      </div>
      <div className={`ml-[2px] flex h-[39px] gap-1 text-xs leading-4 ${textShadow}`}>
        <button className="w-[36px]">Grid<br />Snap</button>
        <button className="w-[50px] rounded-md bg-[#1a7fff]">Straight<br />Snap</button>
        <button className="w-[44px] rounded-md bg-[#1a7fff]">Object<br />Snap</button>
      </div>
      <div className="ml-[18px] flex">
        {selectTools.map(([label, icon, w]) => (
          <IconButton key={label} icon={icon} label={label} className={w} />
        ))}
        <IconButton icon={LibraryIcon} label="Obj Library" className="w-[86px]" />
      </div>
      <div className="ml-auto flex pr-[101px]">
        <IconButton icon={OptionsIcon} label="Options" className="w-[42px]" />
        <IconButton icon={HelpIcon} label="Help" className="w-[32px]" />
        <button aria-label="Collapse" className="mr-[15px] ml-[7px] pt-[3px]">
          <svg width="16" height="16" viewBox="0 0 16 16" fill="none" stroke="#1f1f1f" strokeWidth="1.2">
            <path d="m1 8 7-6 7 6M1 15l7-6 7 6" />
          </svg>
        </button>
        <button className={`mt-3 h-7 w-[69px] rounded-[3px] border border-[#2a2a2a] bg-[#1a7fff] text-[13px] ${textShadow}`}>
          Browser
        </button>
      </div>
    </footer>
  );
}

export default function App() {
  return (
    <div className="flex h-screen flex-col overflow-hidden bg-[#444] font-['Noto_Sans',sans-serif] text-[#dcdcdc]">
      <div className="flex min-h-0 flex-1">
        <div className="w-[200px] shrink-0">
          <ObjectBrowser />
        </div>
        <Viewports />
        <ToolPalette />
      </div>
      <BottomBar />
    </div>
  );
}
